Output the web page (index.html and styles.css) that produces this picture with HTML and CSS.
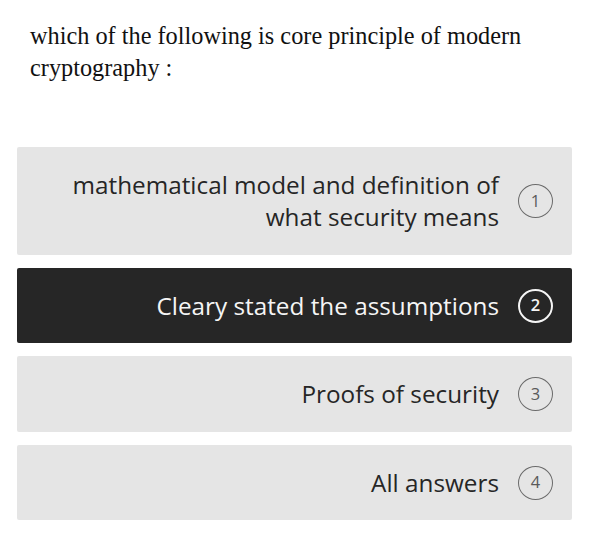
FILE: index.html
```html
<!DOCTYPE html>
<html>
<head>
<meta charset="utf-8">
<link rel="stylesheet" href="styles.css">
</head>
<body>
<div class="page">
  <p class="question">which of the following is core principle of modern cryptography :</p>
  <div class="options">
    <div class="option">
      <span class="label">mathematical model and definition of what security means</span>
      <span class="num">1</span>
    </div>
    <div class="option selected">
      <span class="label">Cleary stated the assumptions</span>
      <span class="num">2</span>
    </div>
    <div class="option">
      <span class="label">Proofs of security</span>
      <span class="num">3</span>
    </div>
    <div class="option">
      <span class="label">All answers</span>
      <span class="num">4</span>
    </div>
  </div>
</div>
</body>
</html>
```

FILE: styles.css
```css
html, body {
  margin: 0;
  padding: 0;
  background: #ffffff;
}
.page {
  padding: 20px 19px 0 17px;
}
.question {
  margin: 0 0 0 13px;
  font-family: "Liberation Serif", "Times New Roman", serif;
  font-size: 24.3px;
  line-height: 32px;
  color: #111;
  max-width: 500px;
}
.options {
  margin-top: 63px;
  display: flex;
  flex-direction: column;
  gap: 13px;
}
.option {
  background: #e5e5e5;
  border-radius: 2px;
  display: flex;
  align-items: center;
  justify-content: flex-end;
  padding: 22px 19px 21.5px 40px;
  font-family: "Open Sans", "Noto Sans", sans-serif;
  font-size: 24.3px;
  line-height: 32px;
  color: #262626;
}
.option.selected {
  background: #262626;
  color: #f5f5f5;
}
.label {
  text-align: right;
  max-width: 450px;
}
.num {
  flex: none;
  box-sizing: border-box;
  margin: -1px 0 -1px 19px;
  width: 35px;
  height: 34px;
  border: 1.5px solid #6a6a6a;
  border-radius: 50%;
  display: flex;
  align-items: center;
  justify-content: center;
  font-size: 16.5px;
  line-height: 1;
  color: #5a5a5a;
}
.selected .num {
  border: 2px solid #f5f5f5;
  color: #f5f5f5;
  font-weight: 600;
}
```
